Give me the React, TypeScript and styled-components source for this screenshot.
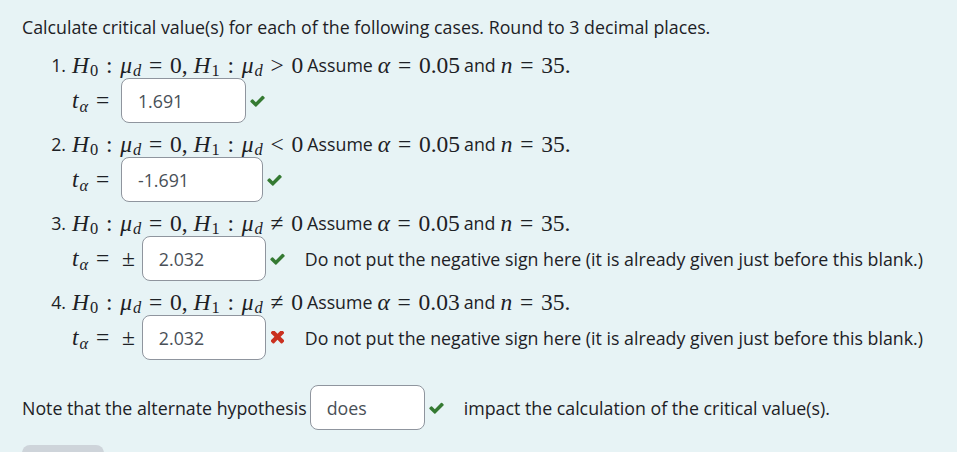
import React from 'react';
import styled, { createGlobalStyle } from 'styled-components';

const GlobalStyle = createGlobalStyle`
	html, body {
		margin: 0;
		padding: 0;
		background: #e7f3f5;
	}
	body {
		font-family: 'Open Sans', 'Noto Sans', sans-serif;
		font-size: 17.8px;
		color: #1d2125;
	}
`;

const Page = styled.div`
	padding: 14px 22px 0 22px;
	height: 452px;
	box-sizing: border-box;
	overflow: hidden;
`;

const Heading = styled.p`
	margin: 0;
	line-height: 26px;
`;

const List = styled.ol`
	margin: 12px 0 0 0;
	padding: 0 0 0 50px;
	list-style: none;
`;

const Item = styled.li`
	position: relative;
	display: flex;
	flex-direction: column;
	margin-bottom: 8px;
`;

const ItemNo = styled.span`
	position: absolute;
	right: calc(100% + 6px);
	top: 0;
	line-height: 26px;
`;

const Question = styled.div`
	height: 26px;
	display: flex;
	align-items: center;
	white-space: nowrap;
`;

const AnswerRow = styled.div`
	height: 45px;
	display: flex;
	align-items: center;
	white-space: nowrap;
`;

const Math = styled.span`
	font-family: 'Liberation Serif', 'DejaVu Serif', serif;
	font-size: 23.5px;
	display: inline-flex;
	align-items: baseline;
`;

const Var = styled.span`
	font-style: italic;
`;

const Sub = styled.span<{ $italic?: boolean }>`
	font-size: 0.7em;
	font-style: ${(p) => (p.$italic ? 'italic' : 'normal')};
	position: relative;
	top: 0.24em;
	margin-left: 1px;
`;

const Rel = styled.span`
	padding: 0 0.33em;
`;

const Gap = styled.span`
	display: inline-block;
	width: 0.25em;
`;

const PlusMinus = styled.span`
	margin-left: 5px;
`;

const Word = styled.span`
	padding: 0 5px 0 4px;
`;

const Field = styled.div<{ $width: number; $offset?: number }>`
	width: ${(p) => p.$width}px;
	height: 45px;
	box-sizing: border-box;
	margin-left: ${(p) => p.$offset ?? 6}px;
	border: 1px solid #8f959e;
	border-radius: 8px;
	background: #fff;
	color: #495057;
	padding-left: 16px;
	display: flex;
	align-items: center;
	font-size: 17.8px;
	flex-shrink: 0;
`;

const Mark = styled.span`
	display: inline-flex;
	margin-left: 3px;
	width: 18px;
	justify-content: center;
`;

const Feedback = styled.span`
	margin-left: 18px;
`;

const Note = styled.div`
	margin-top: 25px;
	display: flex;
	align-items: center;
	white-space: nowrap;
	height: 45px;
`;

const Button = styled.div`
	margin-top: 15px;
	width: 82px;
	height: 36px;
	border-radius: 8px;
	background: #ced4da;
`;

const Check = () => (
	<Mark>
		<svg width="17" height="14" viewBox="0 0 1792 1500" fill="#357a32">
			<path d="M1671 420q0 40-28 68l-724 724-136 136q-28 28-68 28t-68-28l-136-136-362-362q-28-28-28-68t28-68l136-136q28-28 68-28t68 28l294 295 656-657q28-28 68-28t68 28l136 136q28 28 28 68z" />
		</svg>
	</Mark>
);

const Cross = () => (
	<Mark>
		<svg width="13" height="13" viewBox="170 300 1100 1100" fill="#ca3120">
			<path d="M1490 1322q0 40-28 68l-136 136q-28 28-68 28t-68-28l-294-294-294 294q-28 28-68 28t-68-28l-136-136q-28-28-28-68t28-68l294-294-294-294q-28-28-28-68t28-68l136-136q28-28 68-28t68 28l294 294 294-294q28-28 68-28t68 28l136 136q28 28 28 68t-28 68l-294 294 294 294q28 28 28 68z" transform="translate(-130 -120) scale(0.95)" />
		</svg>
	</Mark>
);

const Hypothesis = ({ rel }: { rel: string }) => (
	<Math>
		<Var>H</Var>
		<Sub>0</Sub>
		<Rel>:</Rel>
		<Var>μ</Var>
		<Sub $italic>d</Sub>
		<Rel>=</Rel>
		<span>0,</span>
		<Gap />
		<Var>H</Var>
		<Sub>1</Sub>
		<Rel>:</Rel>
		<Var>μ</Var>
		<Sub $italic>d</Sub>
		<Rel>{rel}</Rel>
		<span>0</span>
	</Math>
);

const Assume = ({ alpha }: { alpha: string }) => (
	<>
		<Word>Assume</Word>
		<Math>
			<Var>α</Var>
			<Rel>=</Rel>
			<span>{alpha}</span>
		</Math>
		<Word>and</Word>
		<Math>
			<Var>n</Var>
			<Rel>=</Rel>
			<span>35.</span>
		</Math>
	</>
);

const TAlpha = ({ pm }: { pm?: boolean }) => (
	<Math>
		<Var>t</Var>
		<Sub $italic>α</Sub>
		<Rel>=</Rel>
		{pm && <PlusMinus>±</PlusMinus>}
	</Math>
);

type Case = {
	rel: string;
	alpha: string;
	value: string;
	width: number;
	pm?: boolean;
	ok: boolean;
};

const cases: Case[] = [
	{ rel: '>', alpha: '0.05', value: '1.691', width: 125, ok: true },
	{ rel: '<', alpha: '0.05', value: '-1.691', width: 142, ok: true },
	{ rel: '≠', alpha: '0.05', value: '2.032', width: 124, pm: true, ok: true },
	{ rel: '≠', alpha: '0.03', value: '2.032', width: 124, pm: true, ok: false },
];

const App = () => {
	return (
		<>
			<GlobalStyle />
			<Page>
				<Heading>Calculate critical value(s) for each of the following cases. Round to 3 decimal places.</Heading>
				<List>
					{cases.map((c, i) => (
						<Item key={i}>
							<ItemNo>{i + 1}.</ItemNo>
							<Question>
								<Hypothesis rel={c.rel} />
								<Assume alpha={c.alpha} />
							</Question>
							<AnswerRow>
								<TAlpha pm={c.pm} />
								<Field $width={c.width} $offset={c.pm ? 7 : 4}>{c.value}</Field>
								{c.ok ? <Check /> : <Cross />}
								{c.pm && (
									<Feedback>Do not put the negative sign here (it is already given just before this blank.)</Feedback>
								)}
							</AnswerRow>
						</Item>
					))}
				</List>
				<Note>
					<span>Note that the alternate hypothesis</span>
					<Field $width={115} $offset={3}>does</Field>
					<Check />
					<Feedback>impact the calculation of the critical value(s).</Feedback>
				</Note>
				<Button />
			</Page>
		</>
	);
};

export default App;
